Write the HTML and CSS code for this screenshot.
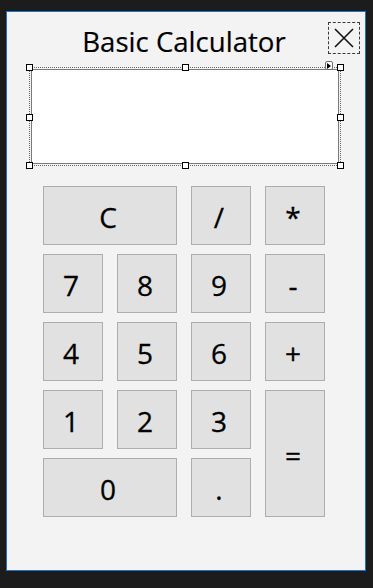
FILE: index.html
```html
<!DOCTYPE html>
<html lang="en">
<head>
<meta charset="utf-8">
<title>Basic Calculator</title>
<link rel="stylesheet" href="styles.css">
</head>
<body>
<div class="window">
  <div class="header">
    <h1 class="title">Basic Calculator</h1>
    <button class="close" type="button" aria-label="Close">
      <svg width="20" height="20" viewBox="0 0 20 20" aria-hidden="true">
        <path d="M1 1 L19 19 M19 1 L1 19" stroke="#111" stroke-width="1.6" fill="none"/>
      </svg>
    </button>
  </div>
  <div class="selection">
    <div class="display"></div>
    <span class="smart-tag"><svg width="4" height="6" viewBox="0 0 4 6"><path d="M0 0 L4 3 L0 6 Z" fill="#000"/></svg></span>
    <span class="handle h-tl"></span>
    <span class="handle h-tm"></span>
    <span class="handle h-tr"></span>
    <span class="handle h-ml"></span>
    <span class="handle h-mr"></span>
    <span class="handle h-bl"></span>
    <span class="handle h-bm"></span>
    <span class="handle h-br"></span>
  </div>
  <div class="keys">
    <button class="key wide" type="button">C</button>
    <button class="key" type="button">/</button>
    <button class="key" type="button">*</button>
    <button class="key" type="button">7</button>
    <button class="key" type="button">8</button>
    <button class="key" type="button">9</button>
    <button class="key" type="button">-</button>
    <button class="key" type="button">4</button>
    <button class="key" type="button">5</button>
    <button class="key" type="button">6</button>
    <button class="key" type="button">+</button>
    <button class="key" type="button">1</button>
    <button class="key" type="button">2</button>
    <button class="key" type="button">3</button>
    <button class="key tall" type="button">=</button>
    <button class="key wide" type="button">0</button>
    <button class="key" type="button">.</button>
  </div>
</div>
</body>
</html>
```

FILE: styles.css
```css
html, body {
  margin: 0;
  padding: 0;
}

body {
  background: #1c1c1c;
  width: 373px;
  height: 588px;
  padding: 11px 0 0 6px;
  box-sizing: border-box;
  font-family: "Open Sans", "Noto Sans", sans-serif;
  overflow: hidden;
}

.window {
  box-sizing: border-box;
  width: 360px;
  height: 560px;
  background: #f3f3f3;
  border: 1px solid #1a73cf;
  padding-top: 10px;
}

.header {
  display: grid;
  grid-template-columns: 1fr auto 1fr;
  align-items: start;
  padding-right: 4px;
  height: 45px;
}

.title {
  grid-column: 2;
  margin: 0;
  font-size: 27.6px;
  font-weight: 400;
  color: #000;
  line-height: 38px;
  white-space: nowrap;
  -webkit-text-stroke: 0.2px #000;
}

.close {
  grid-column: 3;
  justify-self: end;
  margin-right: 1px;
  width: 32px;
  height: 32px;
  box-sizing: border-box;
  border: 1px dashed #3a3a3a;
  background: transparent;
  padding: 0;
  display: flex;
  align-items: center;
  justify-content: center;
}

.selection {
  position: relative;
  box-sizing: border-box;
  width: 312px;
  height: 99px;
  margin-left: 22px;
  border: 1px dotted #666;
  padding: 1px;
}

.display {
  box-sizing: border-box;
  width: 100%;
  height: 100%;
  background: #fff;
  border: 1px solid #7a7a7a;
}

.smart-tag {
  position: absolute;
  top: -7px;
  right: 7px;
  width: 8px;
  height: 9px;
  box-sizing: border-box;
  border: 1px solid #6e6e6e;
  border-radius: 2px;
  background: #fff;
  display: flex;
  align-items: center;
  justify-content: center;
}

.handle {
  position: absolute;
  width: 7px;
  height: 7px;
  box-sizing: border-box;
  border: 1px solid #000;
  background: #fff;
}

.h-tl { left: -4px; top: -4px; }
.h-tm { left: calc(50% - 3px); top: -4px; }
.h-tr { right: -4px; top: -4px; }
.h-ml { left: -4px; top: calc(50% - 3px); }
.h-mr { right: -4px; top: calc(50% - 3px); }
.h-bl { left: -4px; bottom: -4px; }
.h-bm { left: calc(50% - 3px); bottom: -4px; }
.h-br { right: -4px; bottom: -4px; }

.keys {
  display: grid;
  grid-template-columns: repeat(4, 60px);
  grid-auto-rows: 59px;
  column-gap: 14px;
  row-gap: 9px;
  margin: 20px 0 0 36px;
}

.key {
  box-sizing: border-box;
  background: #e1e1e1;
  border: 1px solid #adadad;
  border-radius: 0;
  padding: 2px 4px 0 0;
  margin: 0;
  font-family: "Open Sans", "Noto Sans", sans-serif;
  font-size: 28px;
  color: #000;
  line-height: 1;
  -webkit-text-stroke: 0.3px #000;
}

.key.wide {
  grid-column: span 2;
}

.key.tall {
  grid-row: span 2;
}
```
